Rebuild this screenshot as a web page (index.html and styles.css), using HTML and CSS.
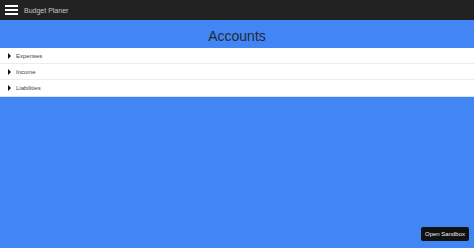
FILE: index.html
```html
<!DOCTYPE html>
<html>
<head>
<meta charset="utf-8">
<link rel="stylesheet" href="styles.css">
</head>
<body>
<header class="navbar">
  <span class="burger"><i></i><i></i><i></i></span>
  <span class="brand">Budget Planer</span>
</header>
<main class="content">
  <h1 class="title">Accounts</h1>
  <ul class="list">
    <li class="item"><span class="caret"></span>Expenses</li>
    <li class="item"><span class="caret"></span>Income</li>
    <li class="item"><span class="caret"></span>Liabilities</li>
  </ul>
</main>
<button class="sandbox">Open Sandbox</button>
</body>
</html>
```
FILE: styles.css
```css
html, body {
  margin: 0;
  padding: 0;
  height: 100%;
}
body {
  background: #4285f4;
  font-family: "Liberation Sans", Arial, sans-serif;
}
.navbar {
  height: 20px;
  background: #222222;
  display: flex;
  align-items: center;
  padding-left: 5px;
  gap: 6px;
}
.burger {
  display: flex;
  flex-direction: column;
  gap: 2px;
  width: 13px;
}
.burger i {
  display: block;
  height: 2px;
  background: #ffffff;
}
.brand {
  color: #c8c8c8;
  font-size: 7px;
}
.content {
  display: flex;
  flex-direction: column;
}
.title {
  margin: 0;
  height: 28px;
  line-height: 32px;
  text-align: center;
  font-size: 14px;
  font-weight: normal;
  color: #222a35;
}
.list {
  list-style: none;
  margin: 0;
  padding: 0;
  background: #ffffff;
  border-bottom: 1px solid #d6e4f8;
}
.item {
  height: 16px;
  display: flex;
  align-items: center;
  font-size: 6px;
  color: #444444;
  border-bottom: 1px solid #ececec;
  padding-left: 8px;
  box-sizing: border-box;
}
.item:last-child {
  border-bottom: none;
}
.caret {
  width: 0;
  height: 0;
  border-top: 3px solid transparent;
  border-bottom: 3px solid transparent;
  border-left: 3px solid #111111;
  margin-right: 5px;
}
.sandbox {
  position: fixed;
  right: 5px;
  bottom: 7px;
  height: 14px;
  padding: 0 4px;
  border: none;
  border-radius: 2px;
  background: #111111;
  color: #eeeeee;
  font-family: "Liberation Sans", Arial, sans-serif;
  font-size: 6px;
}
```
